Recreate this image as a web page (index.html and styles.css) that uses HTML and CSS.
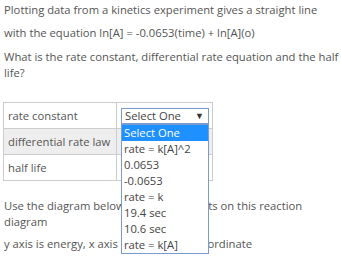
FILE: index.html
```html
<!DOCTYPE html>
<html lang="en">
<head>
    <meta charset="UTF-8">
    <title>Kinetics question</title>
    <link rel="stylesheet" href="styles.css">
</head>
<body>
    <div class="question">
        <p class="first">Plotting data from a kinetics experiment gives a straight line</p>
        <p>with the equation ln[A] = -0.0653(time) + ln[A](o)</p>
        <p>What is the rate constant, differential rate equation and the half life?</p>

        <table class="match">
            <tr>
                <td class="label">rate constant</td>
                <td class="pick">
                    <div class="select-wrap">
                        <div class="select open">Select One<span class="arrow">▼</span></div>
                        <ul class="options">
                            <li class="active">Select One</li>
                            <li>rate = k[A]^2</li>
                            <li>0.0653</li>
                            <li>-0.0653</li>
                            <li>rate = k</li>
                            <li>19.4 sec</li>
                            <li>10.6 sec</li>
                            <li>rate = k[A]</li>
                        </ul>
                    </div>
                </td>
            </tr>
            <tr class="alt">
                <td class="label">differential rate law</td>
                <td class="pick"><div class="select">Select One<span class="arrow">▼</span></div></td>
            </tr>
            <tr>
                <td class="label">half life</td>
                <td class="pick"><div class="select">Select One<span class="arrow">▼</span></div></td>
            </tr>
        </table>

        <p class="after">Use the diagram below to find the points on this reaction diagram</p>
        <p>y axis is energy, x axis <span class="tight">is the reaction co</span>ordinate</p>
    </div>
</body>
</html>
```

FILE: styles.css
```css
body{
    margin: 0;
    padding: 2px 0 0 4px;
    font-family: "Open Sans", "Noto Sans", sans-serif;
    font-size: 11.25px;
    line-height: 16px;
    color: #555;
    background-color: #fff;
}
p{
    margin: 0 0 8px 0;
}
.first{
    margin-bottom: 7px;
}
.question{
    width: 336px;
}
.match{
    border-collapse: collapse;
    margin: 21px 0 17px -1px;
    width: 210px;
}
.match td{
    border: 1px solid #ccc;
    height: 25px;
    padding: 0;
    vertical-align: middle;
}
.match .label{
    width: 108px;
    padding-left: 4px;
    white-space: nowrap;
}
.match .pick{
    padding-left: 4px;
}
.alt td{
    background-color: #eee;
}
.select-wrap{
    position: relative;
}
.select{
    box-sizing: border-box;
    width: 88px;
    height: 16px;
    border: 1px solid #a9a9a9;
    background-color: #fff;
    line-height: 14px;
    padding-left: 3px;
    position: relative;
    color: #444;
}
.select.open{
    border-color: #7b9bd0;
}
.arrow{
    position: absolute;
    right: 4px;
    top: 0;
    font-size: 9px;
    color: #333;
}
.options{
    position: absolute;
    left: 0;
    top: 16px;
    z-index: 10;
    list-style: none;
    margin: 0;
    padding: 0;
    width: 88px;
    box-sizing: border-box;
    border: 1px solid #7b9bd0;
    background-color: #fff;
}
.options li{
    height: 16px;
    line-height: 16px;
    padding-left: 2px;
    white-space: nowrap;
    color: #444;
}
.options .active{
    background-color: #1e90ff;
    color: #fff;
}
.after{
    margin-bottom: 6px;
    width: 310px;
}
/* part of the line that sits under the open list */
.tight{
    letter-spacing: -0.15px;
}
```
